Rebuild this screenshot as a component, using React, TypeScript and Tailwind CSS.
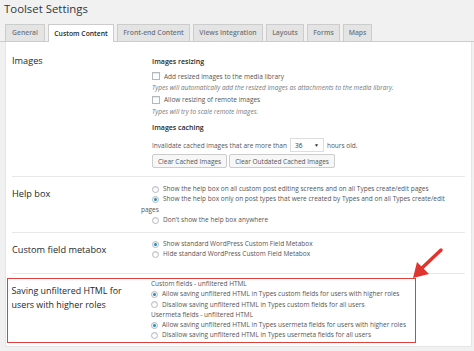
import React from 'react';

const tabs = [
  { name: 'General', w: 'w-[40px]' },
  { name: 'Custom Content', w: 'w-[66px]' },
  { name: 'Front-end Content', w: 'w-[73px]' },
  { name: 'Views Integration', w: 'w-[70px]' },
  { name: 'Layouts', w: 'w-[38px]' },
  { name: 'Forms', w: 'w-[33px]' },
  { name: 'Maps', w: 'w-[29px]' },
];

function Radio({ checked }: { checked?: boolean }) {
  return (
    <span className="inline-flex w-[7px] h-[7px] shrink-0 rounded-full border border-[#b4b9be] bg-white items-center justify-center mr-[4px] shadow-[inset_0_1px_1px_rgba(0,0,0,0.1)]">
      {checked && <span className="w-[3px] h-[3px] rounded-full bg-[#1e8cbe]" />}
    </span>
  );
}

function RadioLine({ checked, children }: { checked?: boolean; children: React.ReactNode }) {
  return (
    <div className="flex items-center">
      <Radio checked={checked} />
      <span>{children}</span>
    </div>
  );
}

function Checkbox() {
  return <span className="w-[8px] h-[8px] border border-[#b4b9be] bg-white mr-[4px] shadow-[inset_0_1px_1px_rgba(0,0,0,0.1)]" />;
}

export default function App() {
  return (
    <div className="relative w-[474px] h-[351px] overflow-hidden bg-[#f1f1f1] font-['Open_Sans',sans-serif] text-[#555]">
      {/* titolo */}
      <div className="h-[24px] pl-[4px] pt-[1px] text-[11.4px] leading-[16px] text-[#32373c]">Toolset Settings</div>

      {/* tabs */}
      <div className="flex items-end h-[18px] pl-[5px] gap-[3px] border-b border-[#ccc]">
        {tabs.map((t) => (
          <div
            key={t.name}
            className={`${t.w} text-center text-[6.8px] font-semibold leading-[15px] border border-b-0 whitespace-nowrap ${
              t.name === 'Custom Content'
                ? 'bg-white border-[#ccc] text-[#23282d] h-[18px] -mb-px pt-px'
                : 'bg-[#e4e4e4] border-[#ccc] text-[#72777c] h-[17px]'
            }`}
          >
            {t.name}
          </div>
        ))}
      </div>

      {/* pannello */}
      <div className="ml-[5px] mr-[2px] h-[305px] bg-white border-x border-b border-[#e5e5e5] px-[6px]">
        {/* Images */}
        <div className="flex border-b border-[#e8e8e8] pt-[14px] pb-[7.5px]">
          <div className="w-[140px] shrink-0 text-[9.2px] leading-[12px] -mt-[1px] text-[#23282d]">Images</div>
          <div className="flex flex-col text-[6.5px]">
            <div className="text-[7px] font-semibold leading-[12px] text-[#23282d]">Images resizing</div>
            <div className="flex items-center h-[12px] mt-[2.4px]">
              <Checkbox />
              <span>Add resized images to the media library</span>
            </div>
            <div className="italic leading-[11.5px] text-[#777]">
              Types will automatically add the resized images as attachments to the media library.
            </div>
            <div className="flex items-center h-[12px]">
              <Checkbox />
              <span>Allow resizing of remote images</span>
            </div>
            <div className="italic leading-[11px] text-[#777]">Types will try to scale remote images.</div>
            <div className="text-[7px] font-semibold leading-[12px] mt-[5.5px] text-[#23282d]">Images caching</div>
            <div className="flex items-center h-[15px] mt-[3.5px]">
              <span>Invalidate cached images that are more than</span>
              <span className="flex items-center justify-between w-[34px] h-[14px] mx-[3px] px-[4px] border border-[#ddd] bg-white text-[#333]">
                <span>36</span>
                <span className="text-[5px]">▼</span>
              </span>
              <span>hours old.</span>
            </div>
            <div className="flex gap-[2px] mt-[1.5px]">
              <span className="h-[14px] px-[5px] flex items-center border border-[#ccc] bg-[#f7f7f7] rounded-[2px]">Clear Cached Images</span>
              <span className="h-[14px] px-[5px] flex items-center border border-[#ccc] bg-[#f7f7f7] rounded-[2px]">Clear Outdated Cached Images</span>
            </div>
          </div>
        </div>

        {/* Help box */}
        <div className="flex border-b border-[#e8e8e8] pt-[7.2px] pb-[6.6px]">
          <div className="w-[140px] shrink-0 text-[9.2px] leading-[12px] pt-[4px] text-[#23282d]">Help box</div>
          <div className="flex flex-col text-[6.5px] leading-[10.3px]">
            <RadioLine>Show the help box on all custom post editing screens and on all Types create/edit pages</RadioLine>
            <RadioLine checked>Show the help box only on post types that were created by Types and on all Types create/edit</RadioLine>
            <div className="-ml-[11px]">pages</div>
            <RadioLine>Don't show the help box anywhere</RadioLine>
          </div>
        </div>

        {/* Custom field metabox */}
        <div className="flex border-b border-[#e8e8e8] pt-[6.3px] pb-[13.7px]">
          <div className="w-[140px] shrink-0 text-[9.2px] leading-[12px] pt-[4.7px] text-[#23282d]">Custom field metabox</div>
          <div className="flex flex-col text-[6.5px] leading-[10px]">
            <RadioLine checked>Show standard WordPress Custom Field Metabox</RadioLine>
            <RadioLine>Hide standard WordPress Custom Field Metabox</RadioLine>
          </div>
        </div>

        {/* Saving unfiltered HTML */}
        <div className="pt-[4px]">
          <div className="flex -ml-[5px] w-[409px] h-[65px] border-[1.5px] border-[#e0403a] pl-[3.5px] pt-[0.4px]">
            <div className="w-[139.5px] shrink-0 text-[8.9px] leading-[14px] pt-[5px] text-[#23282d]">
              Saving unfiltered HTML for
              <br />
              users with higher roles
            </div>
            <div className="flex flex-col text-[6.5px] leading-[10.2px]">
              <div>Custom fields - unfiltered HTML</div>
              <RadioLine checked>Allow saving unfiltered HTML in Types custom fields for users with higher roles</RadioLine>
              <RadioLine>Disallow saving unfiltered HTML in Types custom fields for all users</RadioLine>
              <div>Usermeta fields - unfiltered HTML</div>
              <RadioLine checked>Allow saving unfiltered HTML in Types usermeta fields for users with higher roles</RadioLine>
              <RadioLine>Disallow saving unfiltered HTML in Types usermeta fields for all users</RadioLine>
            </div>
          </div>
        </div>
      </div>

      {/* freccia rossa */}
      <svg className="absolute left-0 top-0" width="474" height="351" viewBox="0 0 474 351">
        <line x1="441" y1="250" x2="422" y2="268" stroke="#e0342f" strokeWidth="3.5" strokeLinecap="round" />
        <polygon points="413,278 417,262 429,274" fill="#e0342f" />
      </svg>
    </div>
  );
}
